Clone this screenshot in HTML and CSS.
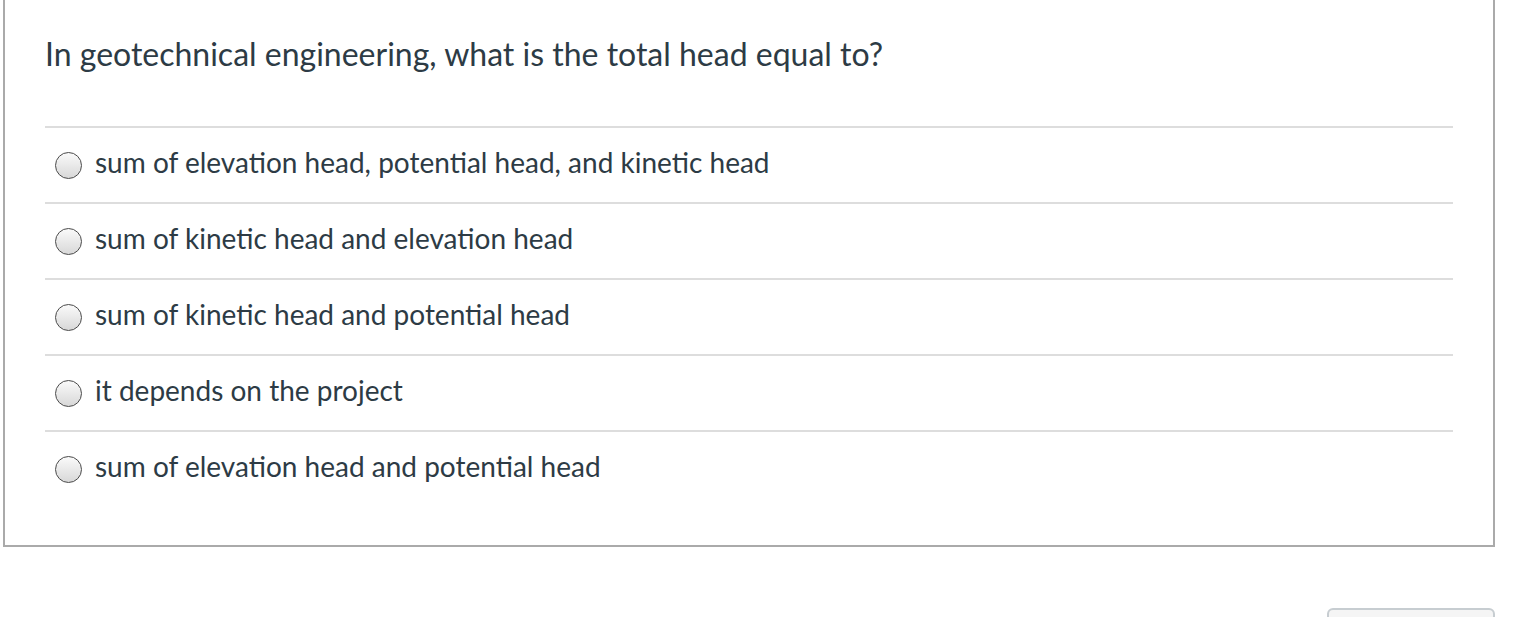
FILE: index.html
```html
<!DOCTYPE html>
<html>
<head>
<meta charset="utf-8">
<link rel="stylesheet" href="styles.css">
</head>
<body>
<div class="quiz">
  <div class="question">In geotechnical engineering, what is the total head equal to?</div>
  <div class="answers">
    <label class="answer"><span class="radio"></span><span class="text">sum of elevation head, potential head, and kinetic head</span></label>
    <label class="answer"><span class="radio"></span><span class="text">sum of kinetic head and elevation head</span></label>
    <label class="answer"><span class="radio"></span><span class="text">sum of kinetic head and potential head</span></label>
    <label class="answer"><span class="radio"></span><span class="text">it depends on the project</span></label>
    <label class="answer"><span class="radio"></span><span class="text">sum of elevation head and potential head</span></label>
  </div>
</div>
<div class="footer">
  <div class="btn"></div>
</div>
</body>
</html>
```
FILE: styles.css
```css
html, body {
  margin: 0;
  padding: 0;
  background: #fff;
  overflow: hidden;
}
body {
  font-family: Lato, "Open Sans", sans-serif;
  color: #2d3b45;
}
.quiz {
  margin-left: 3px;
  width: 1492px;
  border: 2px solid #aaaaaa;
  border-top: none;
  padding: 0 40px 39px 40px;
  box-sizing: border-box;
}
.question {
  height: 126px;
  box-sizing: border-box;
  padding-top: 34px;
  font-size: 32px;
  line-height: 40px;
}
.answers {
  width: 1408px;
}
.answer {
  display: flex;
  align-items: center;
  height: 76px;
  box-sizing: border-box;
  border-top: 2px solid #dddddd;
  padding-left: 10px;
  padding-bottom: 6px;
  font-size: 28px;
}
.radio {
  width: 25px;
  height: 25px;
  border: 1.5px solid #4a4a4a;
  border-radius: 50%;
  background: linear-gradient(#fafafa, #d8d8d8);
  flex: none;
  margin-right: 13px;
  margin-top: 6px;
}
.footer {
  display: flex;
  justify-content: flex-end;
  width: 1495px;
  padding-top: 61px;
}
.btn {
  width: 164px;
  height: 40px;
  border: 2px solid #c7cdd1;
  border-radius: 6px;
  background: #f5f5f5;
}
```
